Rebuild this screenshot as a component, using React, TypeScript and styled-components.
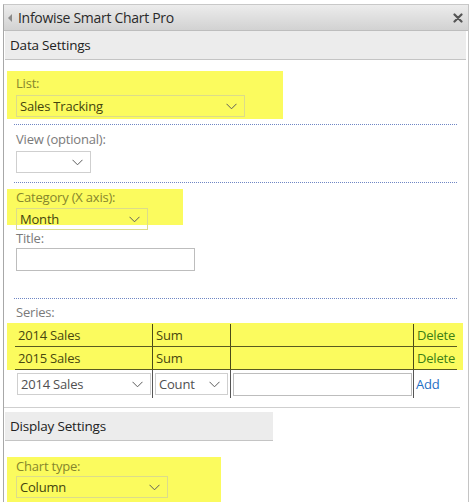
import React from 'react';
import styled, { createGlobalStyle } from 'styled-components';

const GlobalStyle = createGlobalStyle`
  html, body {
    margin: 0;
    padding: 0;
    background: #ffffff;
    font-family: 'Open Sans', 'Noto Sans', sans-serif;
  }
`;

const YELLOW = '#fbfb5e';

const Panel = styled.div`
  margin: 4px 0 0 3px;
  width: 466px;
  height: 498px;
  border-left: 1px solid #a8a8a8;
  border-right: 1px solid #c4c4c4;
  border-top: 1px solid #c8c8c8;
  overflow: hidden;
  box-sizing: border-box;
`;

const TitleBar = styled.div`
  height: 25px;
  display: flex;
  align-items: center;
  padding: 0 5px 0 4px;
  background: linear-gradient(#ececec, #d2d2d2);
  border-bottom: 1px solid #bdbdbd;
  font-size: 14px;
  color: #2a2a2a;
`;

const Arrow = styled.span`
  width: 0;
  height: 0;
  border-top: 4px solid transparent;
  border-bottom: 4px solid transparent;
  border-right: 4px solid #8a8a8a;
  margin-right: 6px;
`;

const TitleText = styled.span`
  flex: 1;
  letter-spacing: -0.3px;
`;

const SectionBar = styled.div<{ $width?: number }>`
  width: ${(p) => (p.$width ? `${p.$width}px` : 'auto')};
  height: 29px;
  margin: 0 2px 0 1px;
  display: flex;
  align-items: center;
  padding-left: 5px;
  box-sizing: border-box;
  background: #ececec;
  border-bottom: 1px solid #c4c4c4;
  font-size: 13.5px;
  color: #222;
  letter-spacing: -0.2px;
`;

const Highlight = styled.div<{ $width: number; $height: number; $top: number }>`
  width: ${(p) => p.$width}px;
  height: ${(p) => p.$height}px;
  margin-left: 3px;
  padding: ${(p) => p.$top}px 0 0 9px;
  box-sizing: border-box;
  background: ${YELLOW};
`;

const Field = styled.div`
  padding-left: 12px;
`;

const Label = styled.div<{ $lit?: boolean }>`
  font-size: 13px;
  line-height: 17px;
  color: ${(p) => (p.$lit ? '#86862c' : '#7a7a7a')};
  letter-spacing: -0.2px;
`;

const SelectBox = styled.div<{ $width: number; $lit?: boolean }>`
  width: ${(p) => p.$width}px;
  height: 22px;
  box-sizing: border-box;
  display: flex;
  align-items: center;
  justify-content: space-between;
  padding: 0 7px 0 3px;
  border: 1px solid ${(p) => (p.$lit ? '#dcdc8a' : '#cfcfcf')};
  background: ${(p) => (p.$lit ? 'transparent' : '#ffffff')};
  font-size: 13px;
  color: ${(p) => (p.$lit ? '#44440e' : '#505050')};
  letter-spacing: -0.2px;
`;

const TextBox = styled.div<{ $width: number; $height?: number }>`
  width: ${(p) => p.$width}px;
  height: ${(p) => p.$height ?? 23}px;
  box-sizing: border-box;
  border: 1px solid #bdbdbd;
  background: #ffffff;
`;

const Dotted = styled.div<{ $top: number; $bottom: number }>`
  margin: ${(p) => p.$top}px 11px ${(p) => p.$bottom}px 10px;
  border-top: 1px dotted #6f86c4;
`;

const Spacer = styled.div<{ $h: number }>`
  height: ${(p) => p.$h}px;
`;

const SeriesLit = styled.div`
  margin-left: 3px;
  width: 456px;
  padding: 1px 0 0 8px;
  box-sizing: border-box;
  background: ${YELLOW};
`;

const SeriesRow = styled.div<{ $lit?: boolean; $height: number }>`
  display: grid;
  grid-template-columns: 138px 78px 183px 43px;
  width: 442px;
  height: ${(p) => p.$height}px;
  box-sizing: border-box;
  border-bottom: ${(p) => (p.$lit ? '1px solid #5a5a20' : 'none')};
`;

const SeriesFree = styled.div`
  margin-left: 11px;
`;

const Cell = styled.div<{ $lit?: boolean; $divider?: boolean }>`
  display: flex;
  align-items: center;
  padding-left: ${(p) => (p.$lit ? '3px' : '2px')};
  border-right: ${(p) =>
    p.$divider ? (p.$lit ? '1px solid #4a4a18' : '1px solid #555') : 'none'};
  font-size: 13px;
  color: #48480f;
  letter-spacing: -0.2px;
  box-sizing: border-box;
`;

const Link = styled.span<{ $lit?: boolean }>`
  font-size: 13px;
  color: ${(p) => (p.$lit ? '#3b7f14' : '#1f6fc4')};
  letter-spacing: -0.2px;
`;

const SolidRule = styled.div`
  margin: 9px 8px 4px 0;
  border-top: 1px solid #cfcfcf;
`;

function Chevron() {
  return (
    <svg width='11' height='7' viewBox='0 0 11 7'>
      <polyline points='0.5,0.8 5.5,5.8 10.5,0.8' fill='none' stroke='#5c5c5c' strokeWidth='1' />
    </svg>
  );
}

function CloseIcon() {
  return (
    <svg width='10' height='10' viewBox='0 0 10 10'>
      <path d='M1.5 1.5 L8.5 8.5 M8.5 1.5 L1.5 8.5' stroke='#555' strokeWidth='2.2' strokeLinecap='round' />
    </svg>
  );
}

function Select({ value, width, lit }: { value?: string; width: number; lit?: boolean }) {
  return (
    <SelectBox $width={width} $lit={lit}>
      <span>{value}</span>
      <Chevron />
    </SelectBox>
  );
}

const litSeries = [
  { name: '2014 Sales', fn: 'Sum' },
  { name: '2015 Sales', fn: 'Sum' },
];

export default function App() {
  return (
    <>
      <GlobalStyle />
      <Panel>
        <TitleBar>
          <Arrow />
          <TitleText>Infowise Smart Chart Pro</TitleText>
          <CloseIcon />
        </TitleBar>
        <SectionBar>Data Settings</SectionBar>

        <Spacer $h={11} />
        <Highlight $width={276} $height={48} $top={4}>
          <Label $lit>List:</Label>
          <Spacer $h={3} />
          <Select value='Sales Tracking' width={229} lit />
        </Highlight>

        <Dotted $top={5} $bottom={6} />
        <Field>
          <Label>View (optional):</Label>
          <Spacer $h={3} />
          <Select width={75} />
        </Field>

        <Dotted $top={9} $bottom={6} />
        <Highlight $width={176} $height={36} $top={0}>
          <Label $lit>Category (X axis):</Label>
          <Spacer $h={2} />
          <Select value='Month' width={132} lit />
        </Highlight>
        <Field>
          <Spacer $h={5} />
          <Label>Title:</Label>
          <Spacer $h={1} />
          <TextBox $width={179} />
        </Field>

        <Dotted $top={27} $bottom={5} />
        <Field>
          <Label>Series:</Label>
        </Field>
        <Spacer $h={2} />
        <SeriesLit>
          {litSeries.map((s) => (
            <SeriesRow key={s.name} $lit $height={23}>
              <Cell $lit $divider>{s.name}</Cell>
              <Cell $lit $divider>{s.fn}</Cell>
              <Cell $lit $divider />
              <Cell $lit>
                <Link $lit>Delete</Link>
              </Cell>
            </SeriesRow>
          ))}
        </SeriesLit>
        <SeriesFree>
          <SeriesRow $height={28}>
            <Cell $divider>
              <Select value='2014 Sales' width={134} />
            </Cell>
            <Cell $divider>
              <Select value='Count' width={73} />
            </Cell>
            <Cell $divider>
              <TextBox $width={179} $height={23} />
            </Cell>
            <Cell>
              <Link>Add</Link>
            </Cell>
          </SeriesRow>
        </SeriesFree>
        <SolidRule />

        <SectionBar $width={268}>Display Settings</SectionBar>
        <Spacer $h={16} />
        <Highlight $width={214} $height={46} $top={1}>
          <Label $lit>Chart type:</Label>
          <Spacer $h={1} />
          <Select value='Column' width={152} lit />
        </Highlight>
      </Panel>
    </>
  );
}
